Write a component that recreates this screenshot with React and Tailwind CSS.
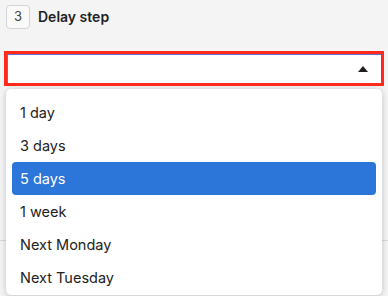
import React from "react";

const items = ["1 day", "3 days", "5 days", "1 week", "Next Monday", "Next Tuesday"];

export default function App() {
  return (
    <div
      className="relative w-[388px] h-[296px] overflow-hidden bg-[#f4f4f4] text-[#1f1f23]"
      style={{ fontFamily: "Inter, 'Noto Sans', sans-serif" }}
    >
      <div className="flex items-center gap-[8px] pl-[6px] pt-[5px]">
        <div className="flex h-[24px] w-[24px] items-center justify-center rounded-[4px] border border-[#d4d4d4] bg-[#fafafa] text-[13px] text-[#444]">
          3
        </div>
        <div className="text-[14px] font-semibold leading-none">Delay step</div>
      </div>
      <div className="mx-[4px] mt-[22px] h-[35px] border-[3px] border-[#ff2a1c]">
        <div className="flex h-full items-center justify-end border-l border-t border-[#6a6fd0] bg-white pr-[13px]">
          <svg width="10" height="6" viewBox="0 0 10 6">
            <path d="M0 6 L5 0 L10 6 Z" fill="#1f1f23" />
          </svg>
        </div>
      </div>
      <div className="h-[155px] border-b border-[#d8d8d8]" />
      <div className="absolute left-[6px] top-[89px] w-[376px] rounded-[5px] bg-white px-[6px] pt-[7px] pb-[1px] shadow-[0_1px_6px_rgba(0,0,0,0.22)]">
        {items.map((it) => (
          <div
            key={it}
            className={
              "flex h-[33px] items-center rounded-[4px] pl-[8px] text-[14.5px] " +
              (it === "5 days" ? "bg-[#2c75d9] text-white" : "text-[#222]")
            }
          >
            {it}
          </div>
        ))}
      </div>
    </div>
  );
}
